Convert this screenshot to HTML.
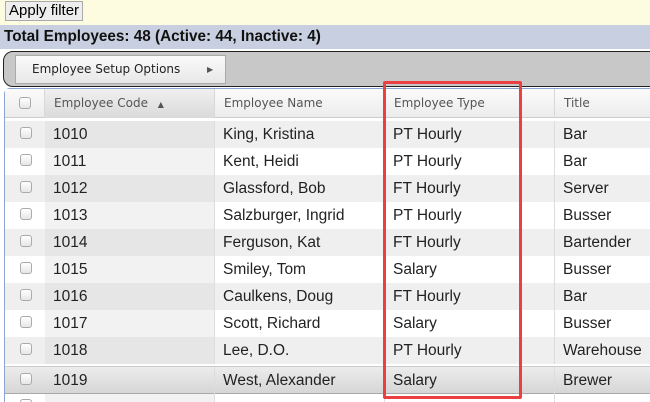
<!DOCTYPE html>
<html><head><style>
*{margin:0;padding:0;box-sizing:border-box}
html,body{width:650px;height:402px;overflow:hidden}
body{background:#fff;font-family:"Liberation Sans",Arial,sans-serif;position:relative}
.top{position:absolute;left:0;top:0;width:650px;height:25px;background:#fdfbe0}
.btn{position:absolute;left:5px;top:1px;width:78px;height:20px;border:1px solid #aaa;background:#eee;font-size:15px;line-height:18px;padding-left:3px;color:#000;white-space:nowrap;overflow:hidden}
.tot{position:absolute;left:0;top:25px;width:650px;height:24px;background:#c7cfe0;font-weight:bold;font-size:15.3px;line-height:24px;padding-left:4px;color:#111}
.tb{position:absolute;left:3px;top:51px;width:660px;height:36px;background:#c8c8c8;border:1px solid #222;border-radius:10px}
.tbb{position:absolute;left:15px;top:55px;width:211px;height:29px;border:1px solid #aaa;background:linear-gradient(#fafafa,#e8e8e8);font-family:"DejaVu Sans",sans-serif;font-size:12px;line-height:27px;padding-left:16px;color:#222}
.tbb span{position:absolute;left:191px;top:0;font-size:8px;color:#555}
.grid{position:absolute;left:4px;top:88px;width:660px;height:320px;border-left:1px solid #8aa4d6;border-top:1px solid #8aa4d6;border-top-left-radius:6px}
.hdr{position:absolute;left:5px;top:89px;width:650px;height:29px;background:linear-gradient(#fbfbfb,#ececec);border-bottom:1px solid #ccc}
.hc{position:absolute;top:0;height:29px;border-right:1px solid #d8d8d8;font-family:"DejaVu Sans",sans-serif;font-size:12px;line-height:28px;color:#555;padding-left:9px}
.row{position:absolute;left:5px;width:650px;height:27px;font-size:15.5px;line-height:27px;color:#222;white-space:nowrap}
.c{position:absolute;top:0;height:27px;padding-left:8px;border-right:1px solid #ddd}
.cb{position:absolute;left:15px;width:12px;height:12px;border:1px solid #aaa;border-radius:3px;background:linear-gradient(#fff,#e6e6e6)}
.red{position:absolute;left:383px;top:81px;width:139px;height:318px;border:3px solid #ec4040;border-radius:2px}
</style></head><body>
<div class="top"></div><div class="btn">Apply filter</div>
<div class="tot">Total Employees: 48 (Active: 44, Inactive: 4)</div>
<div class="tb"></div>
<div class="tbb">Employee Setup Options<span>▶</span></div>
<div class="grid"></div>
<div class="hdr">
<div class="hc" style="left:0;width:40px"></div>
<div class="cb" style="top:8px;left:14px"></div>
<div class="hc" style="left:40px;width:170px;background:linear-gradient(#f0f0f0,#dadada)">Employee Code <span style="font-size:8px;margin-left:6px">▲</span></div>
<div class="hc" style="left:210px;width:170px">Employee Name</div>
<div class="hc" style="left:380px;width:170px">Employee Type</div>
<div class="hc" style="left:550px;width:110px">Title</div>
</div>
<div class="row" style="top:121px;background:#efefef"><div class="cb" style="top:6px"></div><div class="c" style="left:40px;width:170px;background:#e6e6e6">1010</div><div class="c" style="left:210px;width:170px">King, Kristina</div><div class="c" style="left:380px;width:170px">PT Hourly</div><div class="c" style="left:550px;width:110px">Bar</div></div>
<div class="row" style="top:148px;background:#fff"><div class="cb" style="top:6px"></div><div class="c" style="left:40px;width:170px;background:#f2f2f2">1011</div><div class="c" style="left:210px;width:170px">Kent, Heidi</div><div class="c" style="left:380px;width:170px">PT Hourly</div><div class="c" style="left:550px;width:110px">Bar</div></div>
<div class="row" style="top:175px;background:#efefef"><div class="cb" style="top:6px"></div><div class="c" style="left:40px;width:170px;background:#e6e6e6">1012</div><div class="c" style="left:210px;width:170px">Glassford, Bob</div><div class="c" style="left:380px;width:170px">FT Hourly</div><div class="c" style="left:550px;width:110px">Server</div></div>
<div class="row" style="top:202px;background:#fff"><div class="cb" style="top:6px"></div><div class="c" style="left:40px;width:170px;background:#f2f2f2">1013</div><div class="c" style="left:210px;width:170px">Salzburger, Ingrid</div><div class="c" style="left:380px;width:170px">PT Hourly</div><div class="c" style="left:550px;width:110px">Busser</div></div>
<div class="row" style="top:229px;background:#efefef"><div class="cb" style="top:6px"></div><div class="c" style="left:40px;width:170px;background:#e6e6e6">1014</div><div class="c" style="left:210px;width:170px">Ferguson, Kat</div><div class="c" style="left:380px;width:170px">FT Hourly</div><div class="c" style="left:550px;width:110px">Bartender</div></div>
<div class="row" style="top:256px;background:#fff"><div class="cb" style="top:6px"></div><div class="c" style="left:40px;width:170px;background:#f2f2f2">1015</div><div class="c" style="left:210px;width:170px">Smiley, Tom</div><div class="c" style="left:380px;width:170px">Salary</div><div class="c" style="left:550px;width:110px">Busser</div></div>
<div class="row" style="top:283px;background:#efefef"><div class="cb" style="top:6px"></div><div class="c" style="left:40px;width:170px;background:#e6e6e6">1016</div><div class="c" style="left:210px;width:170px">Caulkens, Doug</div><div class="c" style="left:380px;width:170px">FT Hourly</div><div class="c" style="left:550px;width:110px">Bar</div></div>
<div class="row" style="top:310px;background:#fff"><div class="cb" style="top:6px"></div><div class="c" style="left:40px;width:170px;background:#f2f2f2">1017</div><div class="c" style="left:210px;width:170px">Scott, Richard</div><div class="c" style="left:380px;width:170px">Salary</div><div class="c" style="left:550px;width:110px">Busser</div></div>
<div class="row" style="top:337px;background:#efefef"><div class="cb" style="top:6px"></div><div class="c" style="left:40px;width:170px;background:#e6e6e6">1018</div><div class="c" style="left:210px;width:170px">Lee, D.O.</div><div class="c" style="left:380px;width:170px">PT Hourly</div><div class="c" style="left:550px;width:110px">Warehouse</div></div>
<div class="row" style="top:366px;background:linear-gradient(#ececec,#d6d6d6);border-top:1px solid #ccc;border-bottom:1px solid #aaa;height:28px"><div class="cb" style="top:6px"></div><div class="c" style="left:40px;width:170px">1019</div><div class="c" style="left:210px;width:170px">West, Alexander</div><div class="c" style="left:380px;width:170px">Salary</div><div class="c" style="left:550px;width:110px">Brewer</div></div>
<div class="row" style="top:394px;background:#fff;height:8px"><div class="cb" style="top:5px"></div><div class="c" style="left:40px;width:170px;background:#f2f2f2;height:8px"></div><div class="c" style="left:210px;width:170px;height:8px"></div><div class="c" style="left:380px;width:170px;height:8px"></div></div>
<div class="red"></div>
</body></html>
